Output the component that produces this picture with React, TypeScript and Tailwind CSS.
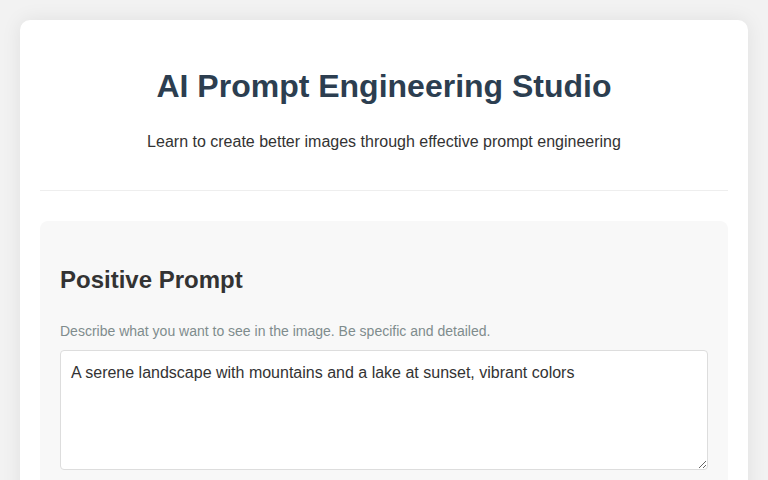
import { useState } from "react";

export default function App() {
  const [positive, setPositive] = useState(
    "A serene landscape with mountains and a lake at sunset, vibrant colors"
  );

  return (
    <div className="min-h-screen bg-[#f2f2f2] p-[20px] font-['Liberation_Sans',Arial,sans-serif]">
      <div className="bg-white rounded-[10px] shadow-[0_0_20px_rgba(0,0,0,0.08)] p-[20px]">
        <header className="text-center pt-[27px] pb-[36px] border-b border-[#eeeeee]">
          <h1 className="text-[32px] leading-[38px] font-bold text-[#2c3e50]">
            AI Prompt Engineering Studio
          </h1>
          <p className="mt-[25px] text-[16px] leading-[24px] text-[#333333]">
            Learn to create better images through effective prompt engineering
          </p>
        </header>

        <section className="mt-[30px] bg-[#f8f8f8] rounded-[8px] px-[20px] pt-[45px] pb-[20px]">
          <h2 className="text-[24px] leading-[28px] font-bold text-[#333333]">
            Positive Prompt
          </h2>
          <p className="mt-[27px] text-[14px] leading-[20px] text-[#7f8c8d]">
            Describe what you want to see in the image. Be specific and detailed.
          </p>
          <textarea
            value={positive}
            onChange={(e) => setPositive(e.target.value)}
            className="mt-[9px] block w-full h-[120px] p-[10px] text-[16px] leading-[24px] text-[#333333] bg-white border border-[#dddddd] rounded-[4px] focus:outline-none"
          />
        </section>
      </div>
    </div>
  );
}
